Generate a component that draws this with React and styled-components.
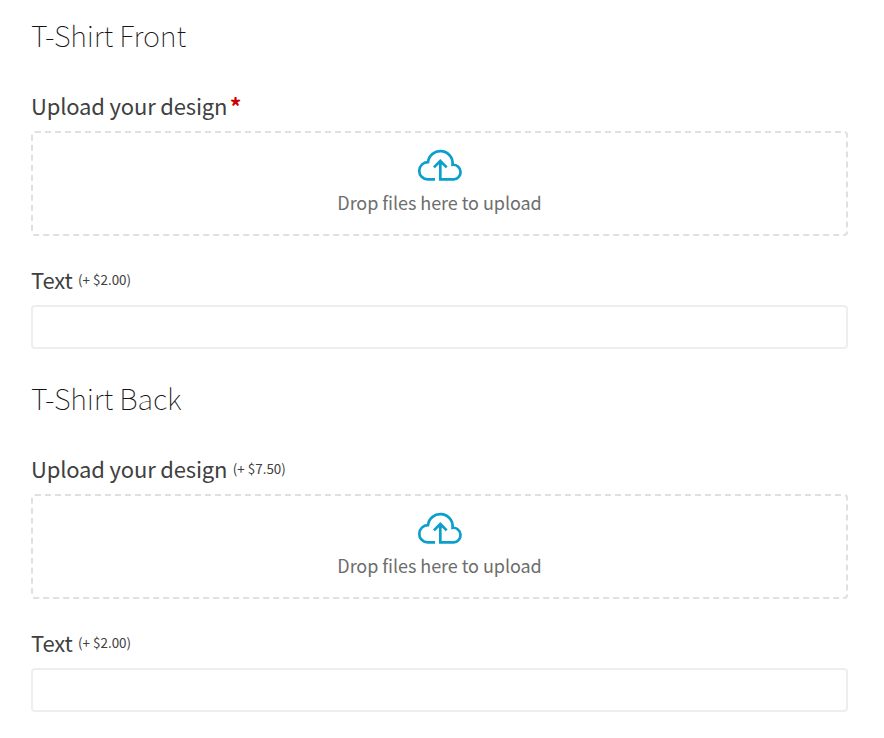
import React from "react";
import styled, { createGlobalStyle } from "styled-components";

const GlobalStyle = createGlobalStyle`
  * { box-sizing: border-box; }
  body {
    margin: 0;
    background: #fff;
    color: #43454b;
    font-family: "Source Sans Pro", "Noto Sans CJK SC", sans-serif;
  }
`;

const Form = styled.form`
  width: 848px;
  padding: 10px 0 0 31px;
`;

const Section = styled.section`
  height: 363px;
`;

const Title = styled.h2`
  margin: 0 0 35px;
  height: 48px;
  line-height: 48px;
  font-size: 29px;
  font-weight: 100;
  letter-spacing: -0.13px;
  white-space: nowrap;
  color: #151515;
`;

const Label = styled.label`
  display: flex;
  height: 38px;
  line-height: 24px;
  font-size: 22px;
  letter-spacing: -0.16px;
  white-space: nowrap;
  color: #404040;
`;

const Required = styled.span`
  margin-left: 2.5px;
  color: #c00;
  font-size: 23px;
  font-weight: 700;
  line-height: 27px;
`;

const Price = styled.span`
  margin-left: 5.5px;
  font-size: 13.4px;
  letter-spacing: 0;
  line-height: 25px;
`;

const DropZone = styled.div`
  display: flex;
  flex-direction: column;
  align-items: center;
  height: 105px;
  margin-bottom: 31px;
  padding-top: 15px;
  border: 2px dashed #e0e0e0;
  border-radius: 4px;
`;

const CloudIcon = styled.svg`
  display: block;
  width: 46px;
  height: 34px;
  fill: none;
  stroke: #0a9fcd;
  stroke-width: 2.7;
`;

const DropText = styled.span`
  margin-top: 8px;
  font-size: 18px;
  line-height: 24px;
  letter-spacing: -0.06px;
  color: #6d6d6d;
  white-space: nowrap;
`;

const TextInput = styled.input`
  display: block;
  width: 100%;
  height: 44px;
  padding: 0 12px;
  border: 2px solid #eee;
  border-radius: 4px;
  background: #fff;
  font: inherit;
  outline: none;
`;

function DesignSection({ title, required, price }) {
  return (
    <Section>
      <Title>{title}</Title>
      <Label>
        <span>Upload your design</span>
        {required && <Required>*</Required>}
        {price && <Price>{price}</Price>}
      </Label>
      <DropZone>
        <CloudIcon viewBox="0 0 46 34">
          <path d="M18 31.4H10.7A8.6 8.6 0 0 1 11 14.2A12.3 12.3 0 0 1 35.6 16.8A7.3 7.3 0 0 1 36.8 31.4H23.3V13.3M16.9 19.4L23.3 13L29.7 19.4" />
        </CloudIcon>
        <DropText>Drop files here to upload</DropText>
      </DropZone>
      <Label>
        <span>Text</span>
        <Price>(+ $2.00)</Price>
      </Label>
      <TextInput type="text" aria-label={title + " text"} />
    </Section>
  );
}

export default function App() {
  return (
    <>
      <GlobalStyle />
      <Form>
        <DesignSection title="T-Shirt Front" required />
        <DesignSection title="T-Shirt Back" price="(+ $7.50)" />
      </Form>
    </>
  );
}
